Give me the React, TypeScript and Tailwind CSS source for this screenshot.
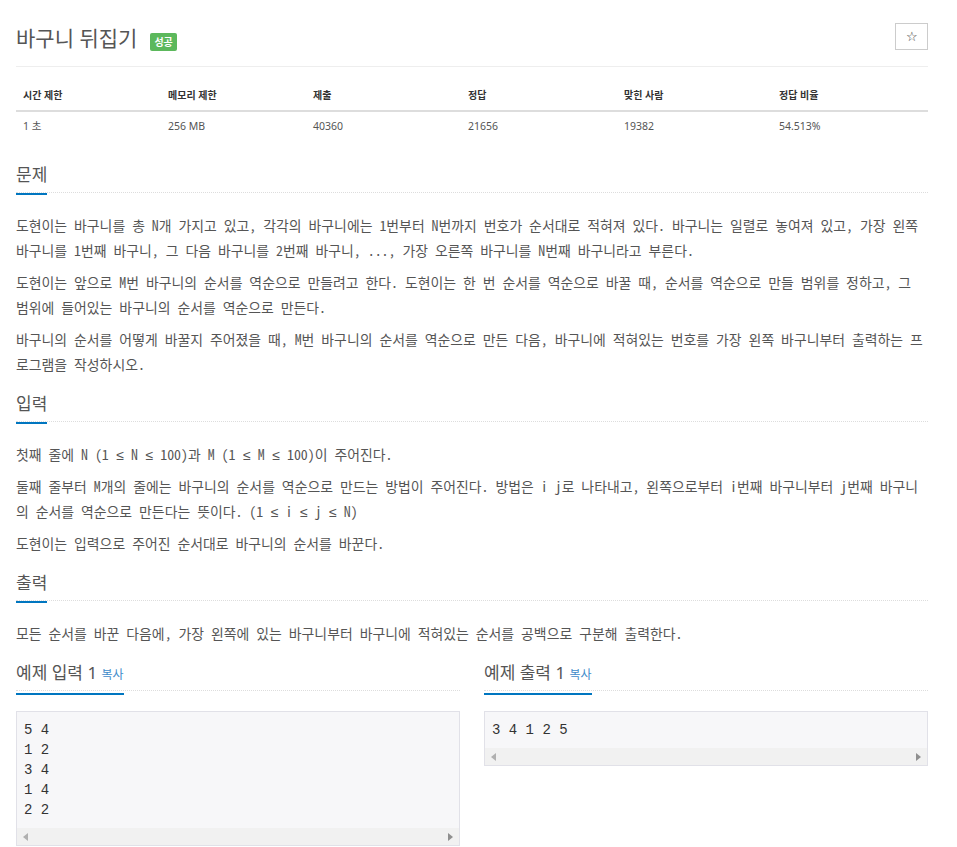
import React from "react";

const bodyFont = { fontFamily: "'Noto Sans Mono CJK KR', 'Liberation Mono', 'Noto Sans CJK KR', monospace" };
const sansFont = { fontFamily: "'Noto Sans', 'Noto Sans CJK KR', sans-serif" };
const monoFont = { fontFamily: "'Liberation Mono', monospace" };

function Le() {
  return (
    <span className="leading-none" style={{ fontFamily: "'Liberation Mono', 'DejaVu Sans Mono', monospace" }}>
      ≤
    </span>
  );
}

function Heading({ children }: { children: React.ReactNode }) {
  return (
    <div className="border-b border-dotted border-[#dddddd] h-[30px]">
      <h2
        className="inline-block text-[17px] leading-[20px] pb-[8px] border-b-2 border-[#0076c0] text-[#555555] font-normal"
        style={sansFont}
      >
        {children}
      </h2>
    </div>
  );
}

function Section({ title, paras, className }: { title: string; paras: React.ReactNode[]; className?: string }) {
  return (
    <section className={className}>
      <Heading>{title}</Heading>
      <div className="mt-[20px] text-[13.9px] leading-[25px] text-[#555555]" style={bodyFont}>
        {paras.map((p, i) => (
          <p key={i} className="mb-[7px]">
            {p}
          </p>
        ))}
      </div>
    </section>
  );
}

function ScrollBar() {
  return (
    <div className="h-[17px] bg-[#f1f1f1] flex items-center justify-between px-[6px]">
      <svg width="5" height="8" viewBox="0 0 5 8">
        <polygon points="5,0 5,8 0,4" fill="#b0b0b0" />
      </svg>
      <svg width="5" height="8" viewBox="0 0 5 8">
        <polygon points="0,0 0,8 5,4" fill="#8f8f8f" />
      </svg>
    </div>
  );
}

function Sample({ title, lines }: { title: string; lines: string[] }) {
  return (
    <div>
      <div className="border-b border-dotted border-[#dddddd] h-[30px]">
        <h2
          className="inline-block text-[17px] leading-[20px] pb-[8px] border-b-2 border-[#0076c0] text-[#555555] font-normal"
          style={sansFont}
        >
          {title} <span className="text-[12px] text-[#428bca]">복사</span>
        </h2>
      </div>
      <div className="mt-[20px] border border-[#e1e1e8] bg-[#f7f7f9]">
        <pre className="px-[7px] pt-[8px] pb-[8px] text-[14px] leading-[20px] text-[#333333] m-0" style={monoFont}>
          {lines.join("\n")}
        </pre>
        <ScrollBar />
      </div>
    </div>
  );
}

export default function App() {
  const cols = ["시간 제한", "메모리 제한", "제출", "정답", "맞힌 사람", "정답 비율"];
  const vals = ["1 초", "256 MB", "40360", "21656", "19382", "54.513%"];
  return (
    <div className="bg-white min-h-[847px] w-[957px]">
      <div className="ml-[16px] w-[912px] pb-[20px]">
        {/* header */}
        <div className="flex justify-between items-start pt-[23px] pb-[13px] border-b border-[#eeeeee]">
          <div className="flex items-start">
            <h1 className="text-[21px] leading-[30px] text-[#555555] font-normal" style={sansFont}>
              바구니 뒤집기
            </h1>
            <span
              className="ml-[13px] mt-[10px] h-[18px] px-[4px] bg-[#5cb85c] text-white text-[10px] font-bold leading-[18px] rounded-[2px]"
              style={sansFont}
            >
              성공
            </span>
          </div>
          <button className="w-[33px] h-[27px] border border-[#cccccc] bg-white flex items-center justify-center text-[13px] leading-none text-[#333333]">
            ☆
          </button>
        </div>

        {/* table */}
        <div className="mt-[14px]" style={sansFont}>
          <div className="grid grid-cols-[145px_145px_155px_156px_155px_1fr] border-b-2 border-[#dddddd]">
            {cols.map((c) => (
              <div key={c} className="px-[7px] h-[29px] leading-[29px] text-[10px] font-bold text-[#333333]">
                {c}
              </div>
            ))}
          </div>
          <div className="grid grid-cols-[145px_145px_155px_156px_155px_1fr]">
            {vals.map((v) => (
              <div key={v} className="px-[7px] h-[28px] leading-[28px] text-[10.5px] text-[#555555]">
                {v}
              </div>
            ))}
          </div>
        </div>

        <Section
          className="mt-[23px]"
          title="문제"
          paras={[
            "도현이는 바구니를 총 N개 가지고 있고, 각각의 바구니에는 1번부터 N번까지 번호가 순서대로 적혀져 있다. 바구니는 일렬로 놓여져 있고, 가장 왼쪽 바구니를 1번째 바구니, 그 다음 바구니를 2번째 바구니, ..., 가장 오른쪽 바구니를 N번째 바구니라고 부른다.",
            "도현이는 앞으로 M번 바구니의 순서를 역순으로 만들려고 한다. 도현이는 한 번 순서를 역순으로 바꿀 때, 순서를 역순으로 만들 범위를 정하고, 그 범위에 들어있는 바구니의 순서를 역순으로 만든다.",
            "바구니의 순서를 어떻게 바꿀지 주어졌을 때, M번 바구니의 순서를 역순으로 만든 다음, 바구니에 적혀있는 번호를 가장 왼쪽 바구니부터 출력하는 프로그램을 작성하시오.",
          ]}
        />
        <Section
          className="mt-[15px]"
          title="입력"
          paras={[
            <>
              첫째 줄에 N (1 <Le /> N <Le /> 100)과 M (1 <Le /> M <Le /> 100)이 주어진다.
            </>,
            <>
              둘째 줄부터 M개의 줄에는 바구니의 순서를 역순으로 만드는 방법이 주어진다. 방법은 i j로 나타내고, 왼쪽으로부터
              i번째 바구니부터 j번째 바구니의 순서를 역순으로 만든다는 뜻이다. (1 <Le /> i <Le /> j <Le /> N)
            </>,
            "도현이는 입력으로 주어진 순서대로 바구니의 순서를 바꾼다.",
          ]}
        />
        <Section
          className="mt-[15px]"
          title="출력"
          paras={["모든 순서를 바꾼 다음에, 가장 왼쪽에 있는 바구니부터 바구니에 적혀있는 순서를 공백으로 구분해 출력한다."]}
        />

        <div className="mt-[15px] grid grid-cols-2 gap-[24px]">
          <Sample title="예제 입력 1" lines={["5 4", "1 2", "3 4", "1 4", "2 2"]} />
          <Sample title="예제 출력 1" lines={["3 4 1 2 5"]} />
        </div>
      </div>
    </div>
  );
}
